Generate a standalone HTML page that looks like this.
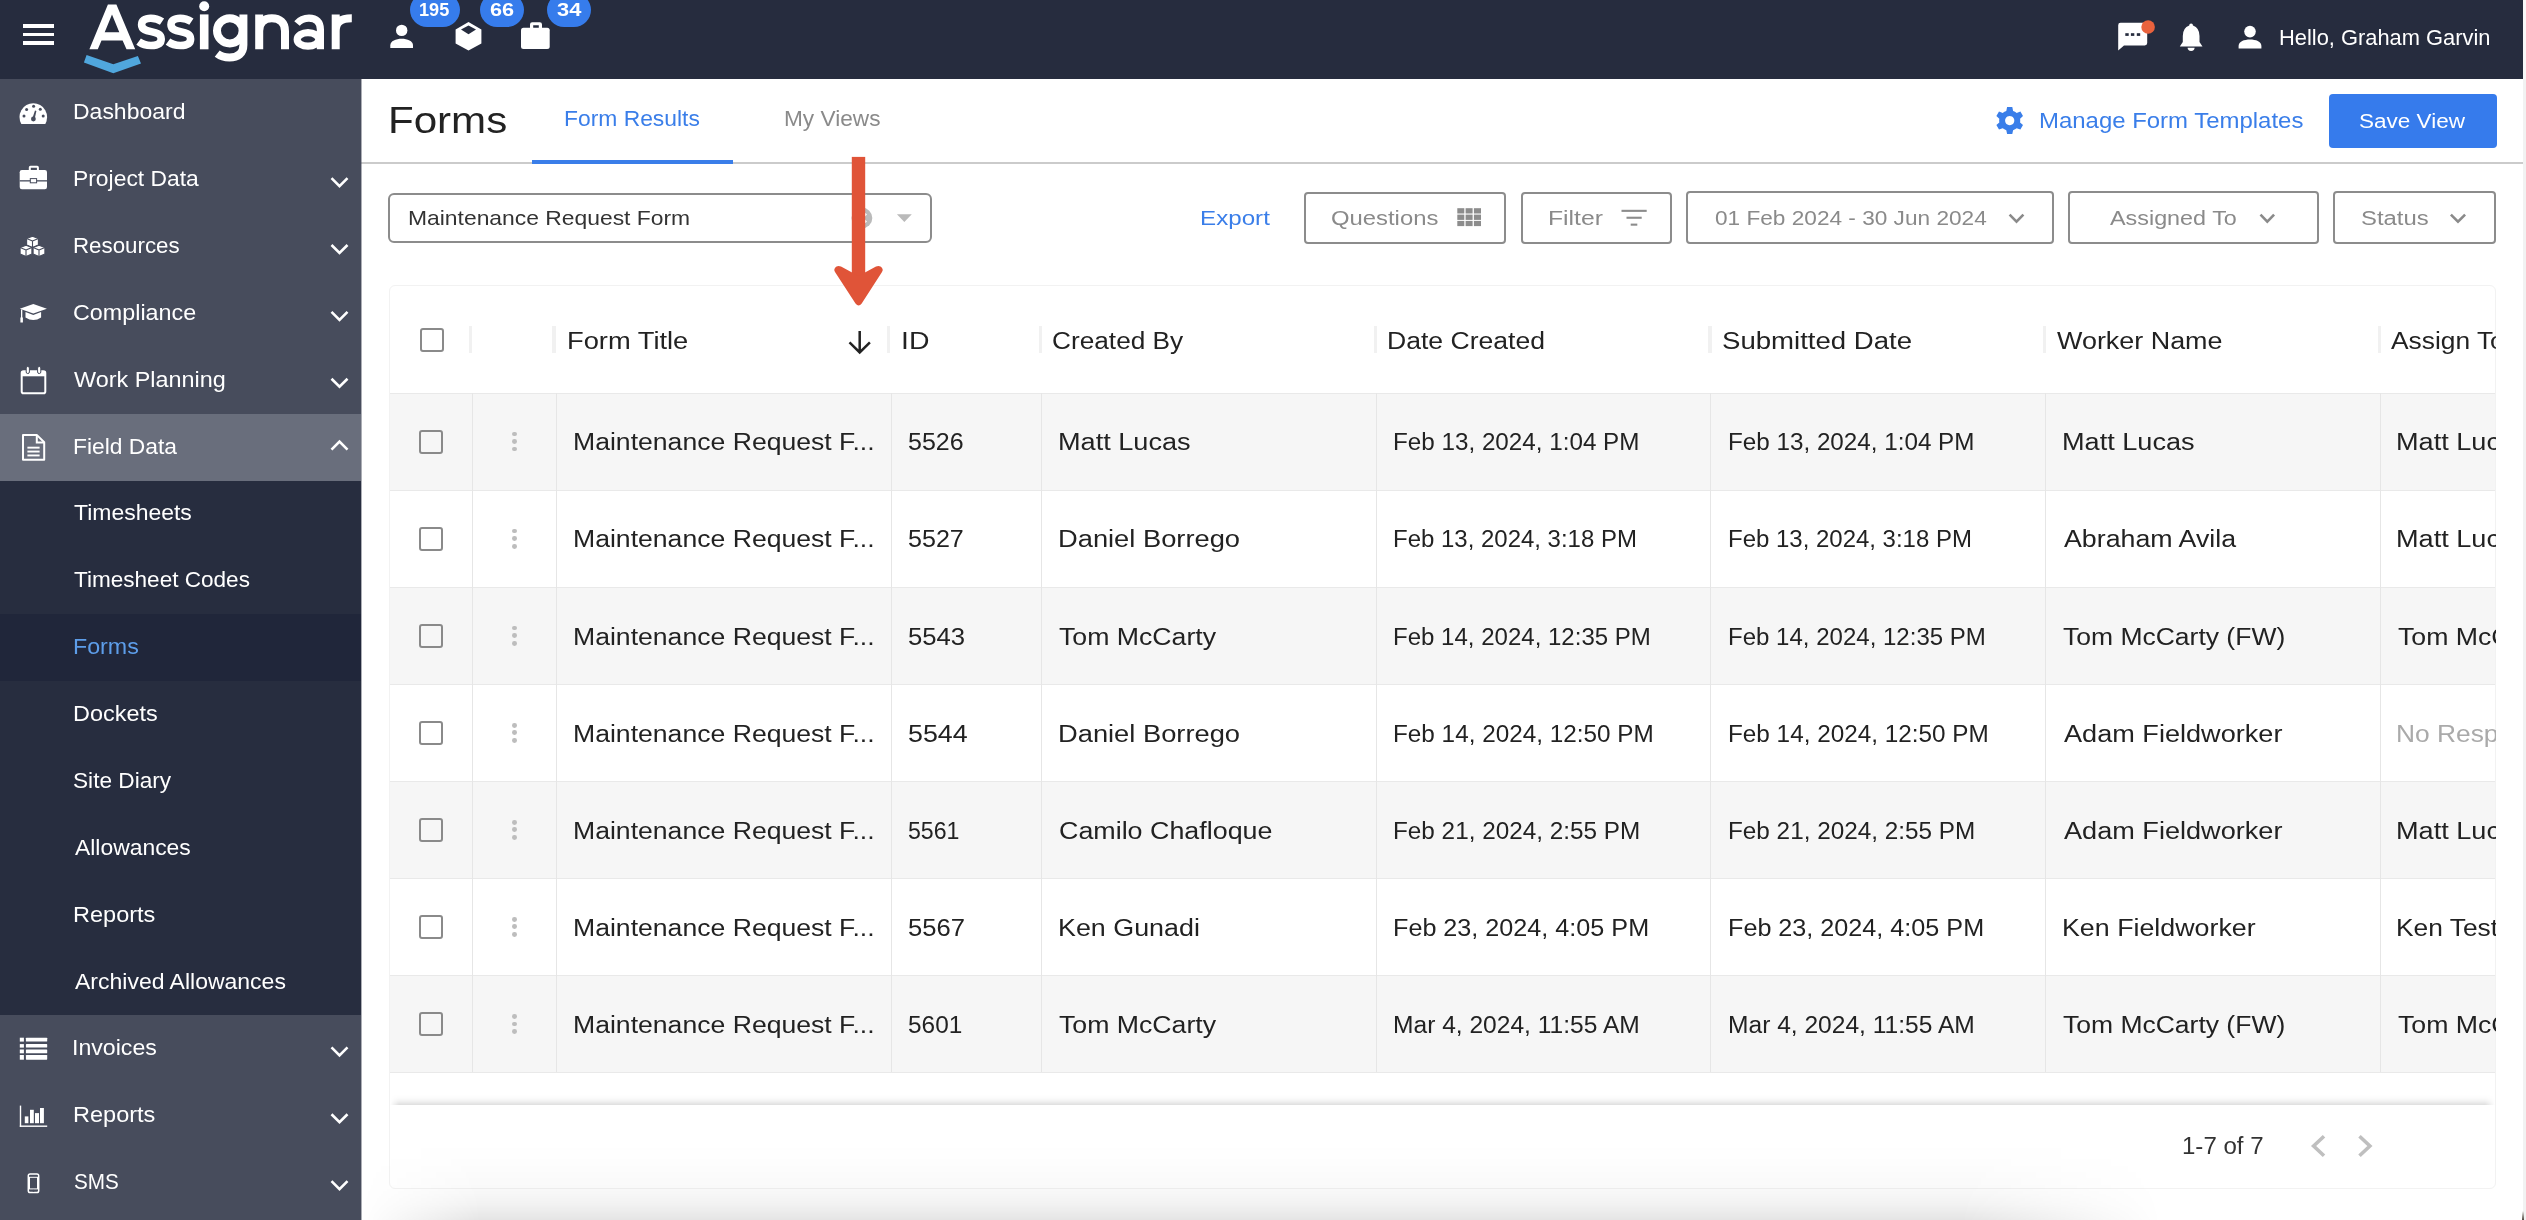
<!DOCTYPE html>
<html><head><meta charset="utf-8"><title>Assignar Forms</title>
<style>
html,body{margin:0;padding:0;}
body{width:2526px;height:1220px;position:relative;overflow:hidden;background:#fff;font-family:"Liberation Sans", sans-serif;}
.t{position:absolute;white-space:nowrap;transform-origin:0 0;}
</style></head><body>
<div style="position:absolute;left:0px;top:0px;width:2523px;height:78.8px;background:#262c3e;"></div><div style="position:absolute;left:23.2px;top:24.3px;width:30.8px;height:3.8px;background:#fff;"></div><div style="position:absolute;left:23.2px;top:32.8px;width:30.8px;height:3.5px;background:#fff;"></div><div style="position:absolute;left:23.2px;top:41px;width:30.8px;height:3.9px;background:#fff;"></div><svg style="position:absolute;left:80px;top:0" width="280" height="70" viewBox="80 0 280 70">
<path fill="#fff" fill-rule="evenodd" d="M89.4,49.3 L107.9,4.4 L116.4,4.4 L135.2,49.3 L126.5,49.3 L122.6,40.5 L101.5,40.5 L97.8,49.3 Z M104.7,32.3 L119.3,32.3 L112,14.6 Z"/>
<g fill="none" stroke="#fff" stroke-width="7.6">
<path d="M162,21.6 C158.5,19.3 155,18.2 150.8,18.2 C144.5,18.2 141.6,21 141.6,24.8 C141.6,34.6 161.2,28.6 161.2,39 C161.2,43 158,45.5 151,45.5 C146,45.5 141.8,44 138.6,41.6"/>
<path d="M191.4,21.6 C187.9,19.3 184.4,18.2 180.2,18.2 C173.9,18.2 171,21 171,24.8 C171,34.6 190.6,28.6 190.6,39 C190.6,43 187.4,45.5 180.4,45.5 C175.4,45.5 171.2,44 168,41.6"/>
</g>
<rect x="199.9" y="14.4" width="8.6" height="34.9" fill="#fff"/>
<circle cx="204.2" cy="6.2" r="5" fill="#fff"/>
<g fill="none" stroke="#fff" stroke-width="8">
<ellipse cx="229.8" cy="30.8" rx="12.8" ry="12.6"/>
<path d="M243.4,14.4 L243.4,45 C243.4,53.5 238,57.5 229.5,57.5 C224.5,57.5 220.5,56.2 217.2,53.6"/>
<path d="M259.2,14.4 L259.2,49.3 M259.2,31 C259.2,22.5 264,18.3 271.8,18.3 C280,18.3 285,22.5 285,31 L285,49.3"/>
<path d="M335.7,14.4 L335.7,49.3 M335.7,31 C335.7,22 341,18.3 351.8,18.3"/>
</g>
<g fill="none" stroke="#fff" stroke-width="7.2">
<path d="M297,23.5 C300,20 304,18.1 309,18.1 C316.5,18.1 320.4,22 320.4,29.5 L320.4,49.3"/>
<ellipse cx="308" cy="39.4" rx="10.8" ry="6.8"/>
</g>
</svg><svg style="position:absolute;left:0;top:0" width="200" height="80"><polygon points="86.6,54.9 83.9,62.6 113.3,73.2 141,63.4 137.9,56 113.3,64.3" fill="#50a7dd"/></svg><svg style="position:absolute;left:380px;top:15px" width="180" height="45" viewBox="380 15 180 45">
<circle cx="401.7" cy="30.4" r="5.7" fill="#fff"/>
<path d="M390.3,48 L390.3,45.5 C390.3,41 396,38.8 401.7,38.8 C407.4,38.8 413,41 413,45.5 L413,48 Z" fill="#fff"/>
<path d="M468.5,22 L481.4,29.5 L481.4,43.5 L468.5,50.5 L455.6,43.5 L455.6,29.5 Z M461,29.6 L468.5,34.2 L476,29.6 L468.5,25.6 Z" fill="#fff" fill-rule="evenodd"/>
<path d="M530,28 L530,24.5 Q530,22.3 532.2,22.3 L539.8,22.3 Q542,22.3 542,24.5 L542,28 L538.8,28 L538.8,25.3 L533.2,25.3 L533.2,28 Z" fill="#fff"/>
<rect x="521" y="27.8" width="28.7" height="21.2" rx="2.5" fill="#fff"/>
</svg><div style="position:absolute;left:410px;top:-7.3px;width:50px;height:34px;background:#367cec;border-radius:17px;"></div><div style="position:absolute;left:479.9px;top:-7.3px;width:44.10000000000002px;height:34px;background:#367cec;border-radius:17px;"></div><div style="position:absolute;left:547px;top:-7.3px;width:44px;height:34px;background:#367cec;border-radius:17px;"></div><svg style="position:absolute;left:2100px;top:10px" width="180" height="50" viewBox="2100 10 180 50">
<path d="M2120.5,22.8 L2144.8,22.8 Q2147.2,22.8 2147.2,25.2 L2147.2,43.1 Q2147.2,45.5 2144.8,45.5 L2124,45.5 L2118.2,50.6 L2118.2,25.2 Q2118.2,22.8 2120.5,22.8 Z" fill="#fff"/>
<rect x="2125.3" y="33.2" width="3.4" height="2.7" fill="#262c3e"/><rect x="2130.9" y="33.2" width="3.4" height="2.7" fill="#262c3e"/><rect x="2136.8" y="33.2" width="3.4" height="2.7" fill="#262c3e"/>
<circle cx="2148.1" cy="27" r="6.8" fill="#e9623d"/>
<path d="M2191.1,23.6 Q2193,23.6 2193,25.6 Q2199.5,28 2199.5,36 L2199.5,42 L2202.5,46.5 L2179.8,46.5 L2182.8,42 L2182.8,36 Q2182.8,28 2189.2,25.6 Q2189.2,23.6 2191.1,23.6 Z" fill="#fff"/>
<path d="M2187.6,47.8 L2194.6,47.8 Q2194.6,50.9 2191.1,50.9 Q2187.6,50.9 2187.6,47.8 Z" fill="#fff"/>
<circle cx="2250" cy="31.6" r="5.8" fill="#fff"/>
<path d="M2238.6,48.6 L2238.6,46 C2238.6,41.5 2244.3,39.5 2250,39.5 C2255.7,39.5 2261.4,41.5 2261.4,46 L2261.4,48.6 Z" fill="#fff"/>
</svg><div style="position:absolute;left:2523px;top:0px;width:3px;height:1220px;background:#f2f2f2;"></div><div style="position:absolute;left:2523px;top:0px;width:3px;height:79px;background:#f8f8f8;"></div><div style="position:absolute;left:0px;top:79.3px;width:361px;height:1140.7px;background:#474c5c;"></div><div style="position:absolute;left:0px;top:413.65000000000003px;width:361px;height:66.87px;background:#696e7c;"></div><div style="position:absolute;left:0px;top:480.52000000000004px;width:361px;height:534.96px;background:#272d3f;"></div><div style="position:absolute;left:0px;top:614.26px;width:361px;height:66.87px;background:#20263a;"></div><svg style="position:absolute;left:0;top:0" width="361" height="1220"><polyline points="331.5,178.10500000000002 339.5,186.10500000000002 347.5,178.10500000000002" fill="none" stroke="#fff" stroke-width="2.6"/><polyline points="331.5,244.97500000000002 339.5,252.97500000000002 347.5,244.97500000000002" fill="none" stroke="#fff" stroke-width="2.6"/><polyline points="331.5,311.845 339.5,319.845 347.5,311.845" fill="none" stroke="#fff" stroke-width="2.6"/><polyline points="331.5,378.71500000000003 339.5,386.71500000000003 347.5,378.71500000000003" fill="none" stroke="#fff" stroke-width="2.6"/><polyline points="331.5,449.58500000000004 339.5,441.58500000000004 347.5,449.58500000000004" fill="none" stroke="#fff" stroke-width="2.6"/><polyline points="331.5,1047.415 339.5,1055.415 347.5,1047.415" fill="none" stroke="#fff" stroke-width="2.6"/><polyline points="331.5,1114.285 339.5,1122.285 347.5,1114.285" fill="none" stroke="#fff" stroke-width="2.6"/><polyline points="331.5,1181.155 339.5,1189.155 347.5,1181.155" fill="none" stroke="#fff" stroke-width="2.6"/></svg><svg style="position:absolute;left:0;top:0" width="60" height="1220" viewBox="0 0 60 1220">
<path d="M21.3,123.9 A13.8,13.8 0 1 1 45.3,123.9 Z" fill="#fff"/>
<g fill="#474c5c"><circle cx="26.6" cy="109.6" r="1.5"/><circle cx="33.6" cy="106.2" r="1.5"/><circle cx="40.3" cy="109.3" r="1.5"/><circle cx="24" cy="116" r="1.5"/><circle cx="43.2" cy="116" r="1.5"/>
<circle cx="33.4" cy="119" r="2.4"/><path d="M32.3,118.5 L35,110.6 L36.4,111 L34.6,119.2 Z"/></g>
<path d="M28.8,170.3 L28.8,167.5 Q28.8,165.8 30.5,165.8 L37.2,165.8 Q38.9,165.8 38.9,167.5 L38.9,170.3 L36.9,170.3 L36.9,167.8 L30.8,167.8 L30.8,170.3 Z" fill="#fff"/>
<rect x="19.7" y="170" width="27.3" height="19.2" rx="2.2" fill="#fff"/>
<rect x="19.7" y="180.2" width="27.3" height="1.3" fill="#474c5c"/>
<rect x="30.3" y="178.6" width="6.3" height="4.2" fill="#fff" stroke="#474c5c" stroke-width="1"/>
<g fill="#fff" stroke="#474c5c" stroke-width="1.1" stroke-linejoin="round">
<path d="M32.5,236.2 L38.4,238.6 L38.4,245 L32.5,247.4 L26.6,245 L26.6,238.6 Z"/><path d="M26.6,238.6 L32.5,241 L38.4,238.6 M32.5,241 L32.5,247.4" fill="none"/>
<path d="M26,245.2 L31.9,247.6 L31.9,254 L26,256.4 L20.1,254 L20.1,247.6 Z"/><path d="M20.1,247.6 L26,250 L31.9,247.6 M26,250 L26,256.4" fill="none"/>
<path d="M39,245.2 L44.9,247.6 L44.9,254 L39,256.4 L33.1,254 L33.1,247.6 Z"/><path d="M33.1,247.6 L39,250 L44.9,247.6 M39,250 L39,256.4" fill="none"/>
</g>
<path d="M19.8,308.8 L33.3,304 L46.9,308.8 L33.3,313.6 Z" fill="#fff"/>
<path d="M25.5,312 L25.5,317.5 Q33.3,322.5 41.1,317.5 L41.1,312 L33.3,315 Z" fill="#fff"/>
<rect x="21" y="309.5" width="1.3" height="9" fill="#fff"/><rect x="20.4" y="317.5" width="2.5" height="5" fill="#fff"/>
<rect x="21.7" y="371.3" width="23.6" height="21.9" rx="1.8" fill="none" stroke="#fff" stroke-width="2"/>
<rect x="21.7" y="371.3" width="23.6" height="5" fill="#fff"/>
<rect x="26.2" y="366.5" width="3.2" height="7" rx="1.5" fill="#fff" stroke="#474c5c" stroke-width="1"/>
<rect x="37.6" y="366.5" width="3.2" height="7" rx="1.5" fill="#fff" stroke="#474c5c" stroke-width="1"/>
<path d="M23,435.1 L37,435.1 L44.2,442.3 L44.2,459.8 L23,459.8 Z" fill="none" stroke="#fff" stroke-width="2" stroke-linejoin="round"/>
<path d="M36.8,435.1 L36.8,442.5 L44.2,442.5" fill="none" stroke="#fff" stroke-width="2"/>
<rect x="27.4" y="446.7" width="12.2" height="1.9" fill="#fff"/><rect x="27.4" y="450.6" width="12.2" height="1.9" fill="#fff"/><rect x="27.4" y="454.5" width="12.2" height="1.9" fill="#fff"/>
<g fill="#fff"><rect x="19.8" y="1037.7" width="4.1" height="3.9"/><rect x="25.9" y="1037.7" width="21.3" height="3.9" rx="0.6"/>
<rect x="19.8" y="1044.1" width="4.1" height="3.5"/><rect x="25.9" y="1044.1" width="21.3" height="3.5" rx="0.6"/>
<rect x="19.8" y="1049.5" width="4.1" height="3.8"/><rect x="25.9" y="1049.5" width="21.3" height="3.8" rx="0.6"/>
<rect x="19.8" y="1055" width="4.1" height="4.7"/><rect x="25.9" y="1055" width="21.3" height="4.7" rx="0.6"/>
<rect x="19.8" y="1105.6" width="1.4" height="21.3"/><rect x="19.8" y="1125.5" width="27.4" height="1.4"/>
<rect x="24.8" y="1116.4" width="3.6" height="6.8"/><rect x="30" y="1109.8" width="3.8" height="13.4"/><rect x="35" y="1113.1" width="4" height="10.1"/><rect x="40" y="1108" width="3.9" height="15.2"/></g>
<rect x="28.3" y="1174" width="10.4" height="18.6" rx="1.8" fill="none" stroke="#fff" stroke-width="1.5"/>
<rect x="28.3" y="1176.8" width="10.4" height="12.6" fill="#fff"/><rect x="30" y="1177.8" width="7" height="10.6" fill="#474c5c"/>
<circle cx="33.5" cy="1190.8" r="1" fill="#474c5c"/>
</svg><div style="position:absolute;left:361px;top:78.8px;width:2162px;height:1141.2px;background:#fff;"></div><div style="position:absolute;left:361px;top:162.4px;width:2162px;height:1.8px;background:#cbcbcb;"></div><div style="position:absolute;left:531.8px;top:159.8px;width:201.4px;height:3.8px;background:#3a7ee9;"></div><svg style="position:absolute;left:1990px;top:100px" width="40" height="40" viewBox="1990 100 40 40">
<g transform="translate(2009.7,120.6)"><path fill="#3a7ee9" fill-rule="evenodd" d="M-2.6,-13.5 L2.6,-13.5 L3.4,-9.6 Q5.4,-8.9 7,-7.7 L10.7,-9 L13.3,-4.5 L10.4,-1.9 Q10.7,0 10.4,1.9 L13.3,4.5 L10.7,9 L7,7.7 Q5.4,8.9 3.4,9.6 L2.6,13.5 L-2.6,13.5 L-3.4,9.6 Q-5.4,8.9 -7,7.7 L-10.7,9 L-13.3,4.5 L-10.4,1.9 Q-10.7,0 -10.4,-1.9 L-13.3,-4.5 L-10.7,-9 L-7,-7.7 Q-5.4,-8.9 -3.4,-9.6 Z M0,-4.6 A4.6,4.6 0 1 0 0.01,-4.6 Z"/></g></svg><div style="position:absolute;left:2329.1px;top:94.1px;width:167.5px;height:53.6px;background:#367bec;border-radius:4px;"></div><div style="position:absolute;left:388.4px;top:193.1px;width:543.3000000000001px;height:50.099999999999994px;background:transparent;box-sizing:border-box;border:2px solid #8c8c8c;border-radius:6px;"></div><svg style="position:absolute;left:840px;top:200px" width="90" height="40" viewBox="840 200 90 40">
<circle cx="861.9" cy="218" r="10.4" fill="#bababa"/><path d="M857.6,213.7 L866.2,222.3 M866.2,213.7 L857.6,222.3" stroke="#fff" stroke-width="2.2"/>
<path d="M896.9,214.3 L911.8,214.3 L904.35,222 Z" fill="#bababa"/></svg><div style="position:absolute;left:1304.1px;top:191.7px;width:202.20000000000005px;height:52.10000000000002px;background:transparent;box-sizing:border-box;border:2px solid #8c8c8c;border-radius:4px;"></div><div style="position:absolute;left:1520.7px;top:191.7px;width:151.29999999999995px;height:52.10000000000002px;background:transparent;box-sizing:border-box;border:2px solid #8c8c8c;border-radius:4px;"></div><div style="position:absolute;left:1686.3px;top:191.3px;width:368.20000000000005px;height:52.69999999999999px;background:transparent;box-sizing:border-box;border:2px solid #8c8c8c;border-radius:4px;"></div><div style="position:absolute;left:2068.3px;top:191.4px;width:250.5999999999999px;height:52.79999999999998px;background:transparent;box-sizing:border-box;border:2px solid #8c8c8c;border-radius:4px;"></div><div style="position:absolute;left:2333px;top:191.4px;width:163.30000000000018px;height:52.79999999999998px;background:transparent;box-sizing:border-box;border:2px solid #8c8c8c;border-radius:4px;"></div><svg style="position:absolute;left:1450px;top:200px" width="1030" height="40" viewBox="1450 200 1030 40">
<g fill="#8c8c8c">
<rect x="1457.3" y="208.2" width="7" height="5.3"/><rect x="1465.6" y="208.2" width="7" height="5.3"/><rect x="1473.9" y="208.2" width="7.1" height="5.3"/>
<rect x="1457.3" y="214.6" width="7" height="5.3"/><rect x="1465.6" y="214.6" width="7" height="5.3"/><rect x="1473.9" y="214.6" width="7.1" height="5.3"/>
<rect x="1457.3" y="220.9" width="7" height="5.2"/><rect x="1465.6" y="220.9" width="7" height="5.2"/><rect x="1473.9" y="220.9" width="7.1" height="5.2"/>
<rect x="1621.5" y="209.8" width="25.2" height="2.1"/><rect x="1626.5" y="216.7" width="15.2" height="2.1"/><rect x="1630.7" y="223.6" width="6.6" height="2.1"/>
</g>
<g fill="none" stroke="#8a8a8a" stroke-width="2.6">
<polyline points="2009.6,214.6 2016.5,221.6 2023.4,214.6"/>
<polyline points="2260.5,214.6 2267.3,221.6 2274.1,214.6"/>
<polyline points="2450.9,214.6 2458,221.6 2465.1,214.6"/>
</g></svg><div style="position:absolute;left:389px;top:285px;width:2106.5px;height:904.3px;background:#fff;box-sizing:border-box;border:1px solid #f2f2f2;border-radius:6px;"></div><div style="position:absolute;left:420.2px;top:328.4px;width:23.6px;height:23.7px;background:transparent;box-sizing:border-box;border:2.6px solid #8a8a8a;border-radius:3px;"></div><div style="position:absolute;left:469px;top:326.3px;width:3.2px;height:26.7px;background:#f1f1f1;"></div><div style="position:absolute;left:552.4px;top:326.3px;width:3.2px;height:26.7px;background:#f1f1f1;"></div><div style="position:absolute;left:887px;top:326.3px;width:3.2px;height:26.7px;background:#f1f1f1;"></div><div style="position:absolute;left:1038.9px;top:326.3px;width:3.2px;height:26.7px;background:#f1f1f1;"></div><div style="position:absolute;left:1373.5px;top:326.3px;width:3.2px;height:26.7px;background:#f1f1f1;"></div><div style="position:absolute;left:1708.4px;top:326.3px;width:3.2px;height:26.7px;background:#f1f1f1;"></div><div style="position:absolute;left:2043.3px;top:326.3px;width:3.2px;height:26.7px;background:#f1f1f1;"></div><div style="position:absolute;left:2378.2px;top:326.3px;width:3.2px;height:26.7px;background:#f1f1f1;"></div><svg style="position:absolute;left:840px;top:325px" width="40" height="35" viewBox="840 325 40 35">
<path d="M859.7,331 L859.7,352 M849.5,342.3 L859.7,352.4 L869.9,342.3" fill="none" stroke="#222" stroke-width="2.5"/></svg><div style="position:absolute;left:390px;top:393.0px;width:2104.5px;height:97.07px;background:#f6f6f6;"></div><div style="position:absolute;left:390px;top:393.0px;width:2104.5px;height:1px;background:#e9e9e9;"></div><div style="position:absolute;left:472.0px;top:393.0px;width:1.2px;height:97.07px;background:#e6e6e6;"></div><div style="position:absolute;left:555.8px;top:393.0px;width:1.2px;height:97.07px;background:#e6e6e6;"></div><div style="position:absolute;left:890.5px;top:393.0px;width:1.2px;height:97.07px;background:#e6e6e6;"></div><div style="position:absolute;left:1040.8px;top:393.0px;width:1.2px;height:97.07px;background:#e6e6e6;"></div><div style="position:absolute;left:1375.5px;top:393.0px;width:1.2px;height:97.07px;background:#e6e6e6;"></div><div style="position:absolute;left:1710.1px;top:393.0px;width:1.2px;height:97.07px;background:#e6e6e6;"></div><div style="position:absolute;left:2045.0px;top:393.0px;width:1.2px;height:97.07px;background:#e6e6e6;"></div><div style="position:absolute;left:2380.0px;top:393.0px;width:1.2px;height:97.07px;background:#e6e6e6;"></div><div style="position:absolute;left:419.1px;top:429.73499999999996px;width:23.8px;height:24.1px;background:transparent;box-sizing:border-box;border:2.6px solid #8a8a8a;border-radius:3px;"></div><div style="position:absolute;left:512.1px;top:431.53499999999997px;width:4.8px;height:4.8px;background:#bdbdbd;border-radius:50%;"></div><div style="position:absolute;left:512.1px;top:439.135px;width:4.8px;height:4.8px;background:#bdbdbd;border-radius:50%;"></div><div style="position:absolute;left:512.1px;top:446.635px;width:4.8px;height:4.8px;background:#bdbdbd;border-radius:50%;"></div><div style="position:absolute;left:390px;top:490.07px;width:2104.5px;height:97.07px;background:#fff;"></div><div style="position:absolute;left:390px;top:490.07px;width:2104.5px;height:1px;background:#e9e9e9;"></div><div style="position:absolute;left:472.0px;top:490.07px;width:1.2px;height:97.07px;background:#e6e6e6;"></div><div style="position:absolute;left:555.8px;top:490.07px;width:1.2px;height:97.07px;background:#e6e6e6;"></div><div style="position:absolute;left:890.5px;top:490.07px;width:1.2px;height:97.07px;background:#e6e6e6;"></div><div style="position:absolute;left:1040.8px;top:490.07px;width:1.2px;height:97.07px;background:#e6e6e6;"></div><div style="position:absolute;left:1375.5px;top:490.07px;width:1.2px;height:97.07px;background:#e6e6e6;"></div><div style="position:absolute;left:1710.1px;top:490.07px;width:1.2px;height:97.07px;background:#e6e6e6;"></div><div style="position:absolute;left:2045.0px;top:490.07px;width:1.2px;height:97.07px;background:#e6e6e6;"></div><div style="position:absolute;left:2380.0px;top:490.07px;width:1.2px;height:97.07px;background:#e6e6e6;"></div><div style="position:absolute;left:419.1px;top:526.8050000000001px;width:23.8px;height:24.1px;background:transparent;box-sizing:border-box;border:2.6px solid #8a8a8a;border-radius:3px;"></div><div style="position:absolute;left:512.1px;top:528.605px;width:4.8px;height:4.8px;background:#bdbdbd;border-radius:50%;"></div><div style="position:absolute;left:512.1px;top:536.205px;width:4.8px;height:4.8px;background:#bdbdbd;border-radius:50%;"></div><div style="position:absolute;left:512.1px;top:543.705px;width:4.8px;height:4.8px;background:#bdbdbd;border-radius:50%;"></div><div style="position:absolute;left:390px;top:587.14px;width:2104.5px;height:97.07px;background:#f6f6f6;"></div><div style="position:absolute;left:390px;top:587.14px;width:2104.5px;height:1px;background:#e9e9e9;"></div><div style="position:absolute;left:472.0px;top:587.14px;width:1.2px;height:97.07px;background:#e6e6e6;"></div><div style="position:absolute;left:555.8px;top:587.14px;width:1.2px;height:97.07px;background:#e6e6e6;"></div><div style="position:absolute;left:890.5px;top:587.14px;width:1.2px;height:97.07px;background:#e6e6e6;"></div><div style="position:absolute;left:1040.8px;top:587.14px;width:1.2px;height:97.07px;background:#e6e6e6;"></div><div style="position:absolute;left:1375.5px;top:587.14px;width:1.2px;height:97.07px;background:#e6e6e6;"></div><div style="position:absolute;left:1710.1px;top:587.14px;width:1.2px;height:97.07px;background:#e6e6e6;"></div><div style="position:absolute;left:2045.0px;top:587.14px;width:1.2px;height:97.07px;background:#e6e6e6;"></div><div style="position:absolute;left:2380.0px;top:587.14px;width:1.2px;height:97.07px;background:#e6e6e6;"></div><div style="position:absolute;left:419.1px;top:623.875px;width:23.8px;height:24.1px;background:transparent;box-sizing:border-box;border:2.6px solid #8a8a8a;border-radius:3px;"></div><div style="position:absolute;left:512.1px;top:625.675px;width:4.8px;height:4.8px;background:#bdbdbd;border-radius:50%;"></div><div style="position:absolute;left:512.1px;top:633.275px;width:4.8px;height:4.8px;background:#bdbdbd;border-radius:50%;"></div><div style="position:absolute;left:512.1px;top:640.775px;width:4.8px;height:4.8px;background:#bdbdbd;border-radius:50%;"></div><div style="position:absolute;left:390px;top:684.21px;width:2104.5px;height:97.07px;background:#fff;"></div><div style="position:absolute;left:390px;top:684.21px;width:2104.5px;height:1px;background:#e9e9e9;"></div><div style="position:absolute;left:472.0px;top:684.21px;width:1.2px;height:97.07px;background:#e6e6e6;"></div><div style="position:absolute;left:555.8px;top:684.21px;width:1.2px;height:97.07px;background:#e6e6e6;"></div><div style="position:absolute;left:890.5px;top:684.21px;width:1.2px;height:97.07px;background:#e6e6e6;"></div><div style="position:absolute;left:1040.8px;top:684.21px;width:1.2px;height:97.07px;background:#e6e6e6;"></div><div style="position:absolute;left:1375.5px;top:684.21px;width:1.2px;height:97.07px;background:#e6e6e6;"></div><div style="position:absolute;left:1710.1px;top:684.21px;width:1.2px;height:97.07px;background:#e6e6e6;"></div><div style="position:absolute;left:2045.0px;top:684.21px;width:1.2px;height:97.07px;background:#e6e6e6;"></div><div style="position:absolute;left:2380.0px;top:684.21px;width:1.2px;height:97.07px;background:#e6e6e6;"></div><div style="position:absolute;left:419.1px;top:720.945px;width:23.8px;height:24.1px;background:transparent;box-sizing:border-box;border:2.6px solid #8a8a8a;border-radius:3px;"></div><div style="position:absolute;left:512.1px;top:722.745px;width:4.8px;height:4.8px;background:#bdbdbd;border-radius:50%;"></div><div style="position:absolute;left:512.1px;top:730.345px;width:4.8px;height:4.8px;background:#bdbdbd;border-radius:50%;"></div><div style="position:absolute;left:512.1px;top:737.845px;width:4.8px;height:4.8px;background:#bdbdbd;border-radius:50%;"></div><div style="position:absolute;left:390px;top:781.28px;width:2104.5px;height:97.07px;background:#f6f6f6;"></div><div style="position:absolute;left:390px;top:781.28px;width:2104.5px;height:1px;background:#e9e9e9;"></div><div style="position:absolute;left:472.0px;top:781.28px;width:1.2px;height:97.07px;background:#e6e6e6;"></div><div style="position:absolute;left:555.8px;top:781.28px;width:1.2px;height:97.07px;background:#e6e6e6;"></div><div style="position:absolute;left:890.5px;top:781.28px;width:1.2px;height:97.07px;background:#e6e6e6;"></div><div style="position:absolute;left:1040.8px;top:781.28px;width:1.2px;height:97.07px;background:#e6e6e6;"></div><div style="position:absolute;left:1375.5px;top:781.28px;width:1.2px;height:97.07px;background:#e6e6e6;"></div><div style="position:absolute;left:1710.1px;top:781.28px;width:1.2px;height:97.07px;background:#e6e6e6;"></div><div style="position:absolute;left:2045.0px;top:781.28px;width:1.2px;height:97.07px;background:#e6e6e6;"></div><div style="position:absolute;left:2380.0px;top:781.28px;width:1.2px;height:97.07px;background:#e6e6e6;"></div><div style="position:absolute;left:419.1px;top:818.015px;width:23.8px;height:24.1px;background:transparent;box-sizing:border-box;border:2.6px solid #8a8a8a;border-radius:3px;"></div><div style="position:absolute;left:512.1px;top:819.8149999999999px;width:4.8px;height:4.8px;background:#bdbdbd;border-radius:50%;"></div><div style="position:absolute;left:512.1px;top:827.415px;width:4.8px;height:4.8px;background:#bdbdbd;border-radius:50%;"></div><div style="position:absolute;left:512.1px;top:834.915px;width:4.8px;height:4.8px;background:#bdbdbd;border-radius:50%;"></div><div style="position:absolute;left:390px;top:878.3499999999999px;width:2104.5px;height:97.07px;background:#fff;"></div><div style="position:absolute;left:390px;top:878.3499999999999px;width:2104.5px;height:1px;background:#e9e9e9;"></div><div style="position:absolute;left:472.0px;top:878.3499999999999px;width:1.2px;height:97.07px;background:#e6e6e6;"></div><div style="position:absolute;left:555.8px;top:878.3499999999999px;width:1.2px;height:97.07px;background:#e6e6e6;"></div><div style="position:absolute;left:890.5px;top:878.3499999999999px;width:1.2px;height:97.07px;background:#e6e6e6;"></div><div style="position:absolute;left:1040.8px;top:878.3499999999999px;width:1.2px;height:97.07px;background:#e6e6e6;"></div><div style="position:absolute;left:1375.5px;top:878.3499999999999px;width:1.2px;height:97.07px;background:#e6e6e6;"></div><div style="position:absolute;left:1710.1px;top:878.3499999999999px;width:1.2px;height:97.07px;background:#e6e6e6;"></div><div style="position:absolute;left:2045.0px;top:878.3499999999999px;width:1.2px;height:97.07px;background:#e6e6e6;"></div><div style="position:absolute;left:2380.0px;top:878.3499999999999px;width:1.2px;height:97.07px;background:#e6e6e6;"></div><div style="position:absolute;left:419.1px;top:915.0849999999999px;width:23.8px;height:24.1px;background:transparent;box-sizing:border-box;border:2.6px solid #8a8a8a;border-radius:3px;"></div><div style="position:absolute;left:512.1px;top:916.8849999999999px;width:4.8px;height:4.8px;background:#bdbdbd;border-radius:50%;"></div><div style="position:absolute;left:512.1px;top:924.4849999999999px;width:4.8px;height:4.8px;background:#bdbdbd;border-radius:50%;"></div><div style="position:absolute;left:512.1px;top:931.9849999999999px;width:4.8px;height:4.8px;background:#bdbdbd;border-radius:50%;"></div><div style="position:absolute;left:390px;top:975.42px;width:2104.5px;height:97.07px;background:#f6f6f6;"></div><div style="position:absolute;left:390px;top:975.42px;width:2104.5px;height:1px;background:#e9e9e9;"></div><div style="position:absolute;left:472.0px;top:975.42px;width:1.2px;height:97.07px;background:#e6e6e6;"></div><div style="position:absolute;left:555.8px;top:975.42px;width:1.2px;height:97.07px;background:#e6e6e6;"></div><div style="position:absolute;left:890.5px;top:975.42px;width:1.2px;height:97.07px;background:#e6e6e6;"></div><div style="position:absolute;left:1040.8px;top:975.42px;width:1.2px;height:97.07px;background:#e6e6e6;"></div><div style="position:absolute;left:1375.5px;top:975.42px;width:1.2px;height:97.07px;background:#e6e6e6;"></div><div style="position:absolute;left:1710.1px;top:975.42px;width:1.2px;height:97.07px;background:#e6e6e6;"></div><div style="position:absolute;left:2045.0px;top:975.42px;width:1.2px;height:97.07px;background:#e6e6e6;"></div><div style="position:absolute;left:2380.0px;top:975.42px;width:1.2px;height:97.07px;background:#e6e6e6;"></div><div style="position:absolute;left:419.1px;top:1012.155px;width:23.8px;height:24.1px;background:transparent;box-sizing:border-box;border:2.6px solid #8a8a8a;border-radius:3px;"></div><div style="position:absolute;left:512.1px;top:1013.9549999999999px;width:4.8px;height:4.8px;background:#bdbdbd;border-radius:50%;"></div><div style="position:absolute;left:512.1px;top:1021.555px;width:4.8px;height:4.8px;background:#bdbdbd;border-radius:50%;"></div><div style="position:absolute;left:512.1px;top:1029.0549999999998px;width:4.8px;height:4.8px;background:#bdbdbd;border-radius:50%;"></div><div style="position:absolute;left:390px;top:1072.49px;width:2104.5px;height:1px;background:#e9e9e9;"></div><div style="position:absolute;left:390px;top:1094px;width:2105px;height:11px;background:linear-gradient(to bottom, rgba(0,0,0,0) 0%, rgba(0,0,0,0.012) 35%, rgba(0,0,0,0.05) 65%, rgba(0,0,0,0.125) 100%);-webkit-mask-image:linear-gradient(to right, transparent 0px, #000 9px, #000 2095px, transparent 2105px);"></div><svg style="position:absolute;left:2300px;top:1125px" width="80" height="40" viewBox="2300 1125 80 40">
<polyline points="2324,1136.2 2313.6,1146 2324,1155.8" fill="none" stroke="#bfbfbf" stroke-width="3.6"/>
<polyline points="2359.5,1136.2 2369.9,1146 2359.5,1155.8" fill="none" stroke="#bfbfbf" stroke-width="3.6"/></svg>
<div class="t" style="left:419.47px;top:-1.78px;font-size:19.28px;line-height:24px;color:#fff;font-weight:bold;transform:scaleX(0.9410);">195</div><div class="t" style="left:489.86px;top:-1.78px;font-size:19.28px;line-height:24px;color:#fff;font-weight:bold;transform:scaleX(1.1250);">66</div><div class="t" style="left:556.68px;top:-1.78px;font-size:19.28px;line-height:24px;color:#fff;font-weight:bold;transform:scaleX(1.1325);">34</div><div class="t" style="left:2278.68px;top:24.06px;font-size:22.32px;line-height:28px;color:#fff;transform:scaleX(0.9802);">Hello, Graham Garvin</div><div class="t" style="left:72.61px;top:99.25px;font-size:21.30px;line-height:27px;color:#fff;transform:scaleX(1.0792);">Dashboard</div><div class="t" style="left:72.62px;top:166.12px;font-size:21.30px;line-height:27px;color:#fff;transform:scaleX(1.0736);">Project Data</div><div class="t" style="left:72.67px;top:232.99px;font-size:21.30px;line-height:27px;color:#fff;transform:scaleX(1.0479);">Resources</div><div class="t" style="left:73.40px;top:299.86px;font-size:21.30px;line-height:27px;color:#fff;transform:scaleX(1.0950);">Compliance</div><div class="t" style="left:74.23px;top:366.73px;font-size:21.30px;line-height:27px;color:#fff;transform:scaleX(1.0989);">Work Planning</div><div class="t" style="left:72.63px;top:433.60px;font-size:21.30px;line-height:27px;color:#fff;transform:scaleX(1.0709);">Field Data</div><div class="t" style="left:73.96px;top:500.47px;font-size:21.30px;line-height:27px;color:#fff;transform:scaleX(1.0778);">Timesheets</div><div class="t" style="left:73.97px;top:567.34px;font-size:21.30px;line-height:27px;color:#fff;transform:scaleX(1.0592);">Timesheet Codes</div><div class="t" style="left:72.59px;top:634.21px;font-size:21.30px;line-height:27px;color:#5d9de9;transform:scaleX(1.0909);">Forms</div><div class="t" style="left:72.57px;top:701.08px;font-size:21.30px;line-height:27px;color:#fff;transform:scaleX(1.1007);">Dockets</div><div class="t" style="left:73.44px;top:767.95px;font-size:21.30px;line-height:27px;color:#fff;transform:scaleX(1.0630);">Site Diary</div><div class="t" style="left:74.50px;top:834.82px;font-size:21.30px;line-height:27px;color:#fff;transform:scaleX(1.0748);">Allowances</div><div class="t" style="left:72.57px;top:901.69px;font-size:21.30px;line-height:27px;color:#fff;transform:scaleX(1.1042);">Reports</div><div class="t" style="left:74.50px;top:968.56px;font-size:21.30px;line-height:27px;color:#fff;transform:scaleX(1.0797);">Archived Allowances</div><div class="t" style="left:72.33px;top:1035.43px;font-size:21.30px;line-height:27px;color:#fff;transform:scaleX(1.0861);">Invoices</div><div class="t" style="left:72.57px;top:1102.30px;font-size:21.30px;line-height:27px;color:#fff;transform:scaleX(1.1042);">Reports</div><div class="t" style="left:73.53px;top:1169.17px;font-size:21.30px;line-height:27px;color:#fff;transform:scaleX(0.9718);">SMS</div><div class="t" style="left:387.65px;top:97.34px;font-size:37.68px;line-height:47px;color:#222;transform:scaleX(1.1169);">Forms</div><div class="t" style="left:564.36px;top:105.16px;font-size:21.74px;line-height:27px;color:#3a7ee9;transform:scaleX(1.0514);">Form Results</div><div class="t" style="left:784.38px;top:105.16px;font-size:21.74px;line-height:27px;color:#8a8a8a;transform:scaleX(1.0422);">My Views</div><div class="t" style="left:2038.61px;top:107.21px;font-size:22.17px;line-height:28px;color:#3a7ee9;transform:scaleX(1.0806);">Manage Form Templates</div><div class="t" style="left:2359.41px;top:108.21px;font-size:20.72px;line-height:26px;color:#fff;transform:scaleX(1.0860);">Save View</div><div class="t" style="left:407.58px;top:205.36px;font-size:20.87px;line-height:26px;color:#333;transform:scaleX(1.0962);">Maintenance Request Form</div><div class="t" style="left:1200.17px;top:205.26px;font-size:20.87px;line-height:26px;color:#3a7ee9;transform:scaleX(1.1590);">Export</div><div class="t" style="left:1331.16px;top:205.26px;font-size:20.87px;line-height:26px;color:#8a8a8a;transform:scaleX(1.1425);">Questions</div><div class="t" style="left:1548.42px;top:205.26px;font-size:20.87px;line-height:26px;color:#8a8a8a;transform:scaleX(1.1864);">Filter</div><div class="t" style="left:1714.58px;top:205.07px;font-size:20.58px;line-height:26px;color:#8a8a8a;transform:scaleX(1.0995);">01 Feb 2024 - 30 Jun 2024</div><div class="t" style="left:2110.20px;top:205.07px;font-size:20.58px;line-height:26px;color:#8a8a8a;transform:scaleX(1.1351);">Assigned To</div><div class="t" style="left:2360.54px;top:205.07px;font-size:20.58px;line-height:26px;color:#8a8a8a;transform:scaleX(1.1595);">Status</div><div class="t" style="left:566.98px;top:325.36px;font-size:24.64px;line-height:31px;color:#222;transform:scaleX(1.1080);">Form Title</div><div class="t" style="left:900.61px;top:325.36px;font-size:24.64px;line-height:31px;color:#222;transform:scaleX(1.1529);">ID</div><div class="t" style="left:1051.87px;top:325.36px;font-size:24.64px;line-height:31px;color:#222;transform:scaleX(1.0653);">Created By</div><div class="t" style="left:1386.54px;top:325.36px;font-size:24.64px;line-height:31px;color:#222;transform:scaleX(1.0790);">Date Created</div><div class="t" style="left:1721.50px;top:325.36px;font-size:24.64px;line-height:31px;color:#222;transform:scaleX(1.1200);">Submitted Date</div><div class="t" style="left:2057.23px;top:325.36px;font-size:24.64px;line-height:31px;color:#222;transform:scaleX(1.0928);">Worker Name</div><div class="t" style="left:572.84px;top:426.39px;font-size:24.64px;line-height:31px;color:#222;transform:scaleX(1.0800);">Maintenance Request F...</div><div class="t" style="left:908.18px;top:426.39px;font-size:24.64px;line-height:31px;color:#222;transform:scaleX(1.0161);">5526</div><div class="t" style="left:1057.80px;top:426.39px;font-size:24.64px;line-height:31px;color:#222;transform:scaleX(1.1013);">Matt Lucas</div><div class="t" style="left:1393.23px;top:426.39px;font-size:24.64px;line-height:31px;color:#222;transform:scaleX(0.9838);">Feb 13, 2024, 1:04 PM</div><div class="t" style="left:1727.83px;top:426.39px;font-size:24.64px;line-height:31px;color:#222;transform:scaleX(0.9838);">Feb 13, 2024, 1:04 PM</div><div class="t" style="left:2061.80px;top:426.39px;font-size:24.64px;line-height:31px;color:#222;transform:scaleX(1.1013);">Matt Lucas</div><div class="t" style="left:572.84px;top:523.46px;font-size:24.64px;line-height:31px;color:#222;transform:scaleX(1.0800);">Maintenance Request F...</div><div class="t" style="left:908.18px;top:523.46px;font-size:24.64px;line-height:31px;color:#222;transform:scaleX(1.0190);">5527</div><div class="t" style="left:1057.78px;top:523.46px;font-size:24.64px;line-height:31px;color:#222;transform:scaleX(1.1082);">Daniel Borrego</div><div class="t" style="left:1393.25px;top:523.46px;font-size:24.64px;line-height:31px;color:#222;transform:scaleX(0.9736);">Feb 13, 2024, 3:18 PM</div><div class="t" style="left:1727.85px;top:523.46px;font-size:24.64px;line-height:31px;color:#222;transform:scaleX(0.9736);">Feb 13, 2024, 3:18 PM</div><div class="t" style="left:2064.00px;top:523.46px;font-size:24.64px;line-height:31px;color:#222;transform:scaleX(1.0869);">Abraham Avila</div><div class="t" style="left:572.84px;top:620.53px;font-size:24.64px;line-height:31px;color:#222;transform:scaleX(1.0800);">Maintenance Request F...</div><div class="t" style="left:908.16px;top:620.53px;font-size:24.64px;line-height:31px;color:#222;transform:scaleX(1.0427);">5543</div><div class="t" style="left:1059.46px;top:620.53px;font-size:24.64px;line-height:31px;color:#222;transform:scaleX(1.0830);">Tom McCarty</div><div class="t" style="left:1393.25px;top:620.53px;font-size:24.64px;line-height:31px;color:#222;transform:scaleX(0.9760);">Feb 14, 2024, 12:35 PM</div><div class="t" style="left:1727.85px;top:620.53px;font-size:24.64px;line-height:31px;color:#222;transform:scaleX(0.9760);">Feb 14, 2024, 12:35 PM</div><div class="t" style="left:2063.46px;top:620.53px;font-size:24.64px;line-height:31px;color:#222;transform:scaleX(1.0758);">Tom McCarty (FW)</div><div class="t" style="left:572.84px;top:717.60px;font-size:24.64px;line-height:31px;color:#222;transform:scaleX(1.0800);">Maintenance Request F...</div><div class="t" style="left:908.11px;top:717.60px;font-size:24.64px;line-height:31px;color:#222;transform:scaleX(1.0887);">5544</div><div class="t" style="left:1057.78px;top:717.60px;font-size:24.64px;line-height:31px;color:#222;transform:scaleX(1.1082);">Daniel Borrego</div><div class="t" style="left:1393.23px;top:717.60px;font-size:24.64px;line-height:31px;color:#222;transform:scaleX(0.9867);">Feb 14, 2024, 12:50 PM</div><div class="t" style="left:1727.83px;top:717.60px;font-size:24.64px;line-height:31px;color:#222;transform:scaleX(0.9867);">Feb 14, 2024, 12:50 PM</div><div class="t" style="left:2064.00px;top:717.60px;font-size:24.64px;line-height:31px;color:#222;transform:scaleX(1.1010);">Adam Fieldworker</div><div class="t" style="left:572.84px;top:814.67px;font-size:24.64px;line-height:31px;color:#222;transform:scaleX(1.0800);">Maintenance Request F...</div><div class="t" style="left:908.26px;top:814.67px;font-size:24.64px;line-height:31px;color:#222;transform:scaleX(0.9390);">5561</div><div class="t" style="left:1058.64px;top:814.67px;font-size:24.64px;line-height:31px;color:#222;transform:scaleX(1.0904);">Camilo Chafloque</div><div class="t" style="left:1393.23px;top:814.67px;font-size:24.64px;line-height:31px;color:#222;transform:scaleX(0.9866);">Feb 21, 2024, 2:55 PM</div><div class="t" style="left:1727.83px;top:814.67px;font-size:24.64px;line-height:31px;color:#222;transform:scaleX(0.9866);">Feb 21, 2024, 2:55 PM</div><div class="t" style="left:2064.00px;top:814.67px;font-size:24.64px;line-height:31px;color:#222;transform:scaleX(1.1010);">Adam Fieldworker</div><div class="t" style="left:572.84px;top:911.74px;font-size:24.64px;line-height:31px;color:#222;transform:scaleX(1.0800);">Maintenance Request F...</div><div class="t" style="left:908.16px;top:911.74px;font-size:24.64px;line-height:31px;color:#222;transform:scaleX(1.0400);">5567</div><div class="t" style="left:1057.82px;top:911.74px;font-size:24.64px;line-height:31px;color:#222;transform:scaleX(1.0909);">Ken Gunadi</div><div class="t" style="left:1393.16px;top:911.74px;font-size:24.64px;line-height:31px;color:#222;transform:scaleX(1.0223);">Feb 23, 2024, 4:05 PM</div><div class="t" style="left:1727.76px;top:911.74px;font-size:24.64px;line-height:31px;color:#222;transform:scaleX(1.0223);">Feb 23, 2024, 4:05 PM</div><div class="t" style="left:2061.82px;top:911.74px;font-size:24.64px;line-height:31px;color:#222;transform:scaleX(1.0883);">Ken Fieldworker</div><div class="t" style="left:572.84px;top:1008.81px;font-size:24.64px;line-height:31px;color:#222;transform:scaleX(1.0800);">Maintenance Request F...</div><div class="t" style="left:908.21px;top:1008.81px;font-size:24.64px;line-height:31px;color:#222;transform:scaleX(0.9905);">5601</div><div class="t" style="left:1059.46px;top:1008.81px;font-size:24.64px;line-height:31px;color:#222;transform:scaleX(1.0830);">Tom McCarty</div><div class="t" style="left:1393.20px;top:1008.81px;font-size:24.64px;line-height:31px;color:#222;transform:scaleX(0.9977);">Mar 4, 2024, 11:55 AM</div><div class="t" style="left:1727.80px;top:1008.81px;font-size:24.64px;line-height:31px;color:#222;transform:scaleX(0.9977);">Mar 4, 2024, 11:55 AM</div><div class="t" style="left:2063.46px;top:1008.81px;font-size:24.64px;line-height:31px;color:#222;transform:scaleX(1.0758);">Tom McCarty (FW)</div><div class="t" style="left:2181.59px;top:1129.76px;font-size:24.64px;line-height:31px;color:#333;transform:scaleX(0.9764);">1-7 of 7</div>
<div style="position:absolute;left:2381px;top:0;width:114.5px;height:1220px;overflow:hidden"><div class="t" style="left:10.30px;top:325.36px;font-size:24.64px;line-height:31px;color:#222;transform:scaleX(1.0700);">Assign To</div><div class="t" style="left:15.30px;top:426.39px;font-size:24.64px;line-height:31px;color:#222;transform:scaleX(1.1013);">Matt Lucas</div><div class="t" style="left:15.30px;top:523.46px;font-size:24.64px;line-height:31px;color:#222;transform:scaleX(1.1013);">Matt Lucas</div><div class="t" style="left:16.96px;top:620.53px;font-size:24.64px;line-height:31px;color:#222;transform:scaleX(1.0830);">Tom McCarty</div><div class="t" style="left:15.36px;top:717.60px;font-size:24.64px;line-height:31px;color:#aaaaaa;transform:scaleX(1.0700);">No Response</div><div class="t" style="left:15.30px;top:814.67px;font-size:24.64px;line-height:31px;color:#222;transform:scaleX(1.1013);">Matt Lucas</div><div class="t" style="left:15.36px;top:911.74px;font-size:24.64px;line-height:31px;color:#222;transform:scaleX(1.0700);">Ken Test</div><div class="t" style="left:16.96px;top:1008.81px;font-size:24.64px;line-height:31px;color:#222;transform:scaleX(1.0830);">Tom McCarty</div></div>
<div style="position:absolute;left:2521.5px;top:1211px;width:2px;height:9px;background:linear-gradient(to bottom, rgba(60,50,40,0), rgba(60,50,40,0.9));"></div><div style="position:absolute;left:361px;top:78.8px;width:1px;height:1141.2px;background:rgba(70,76,92,0.45);"></div><div style="position:absolute;left:361px;top:1140px;width:2162px;height:80px;background:linear-gradient(to bottom, rgba(0,0,0,0) 0%, rgba(0,0,0,0.004) 20%, rgba(0,0,0,0.022) 60%, rgba(0,0,0,0.05) 80%, rgba(0,0,0,0.10) 100%);-webkit-mask-image:linear-gradient(to right, transparent 0px, #000 120px, #000 1600px, transparent 1800px);"></div><svg style="position:absolute;left:820px;top:150px" width="80" height="170" viewBox="820 150 80 170">
<rect x="851.8" y="156.9" width="13.4" height="125" fill="#e05438"/>
<path d="M836.5,266.5 Q833,269 835,272 L855.5,303.5 Q858.6,307.5 861.7,303.5 L882,272 Q884,269 880.5,266.5 Q878.5,265.5 876,266.5 L858.5,276 L841,266.5 Q838.5,265.5 836.5,266.5 Z" fill="#e05438"/>
</svg>
</body></html>
